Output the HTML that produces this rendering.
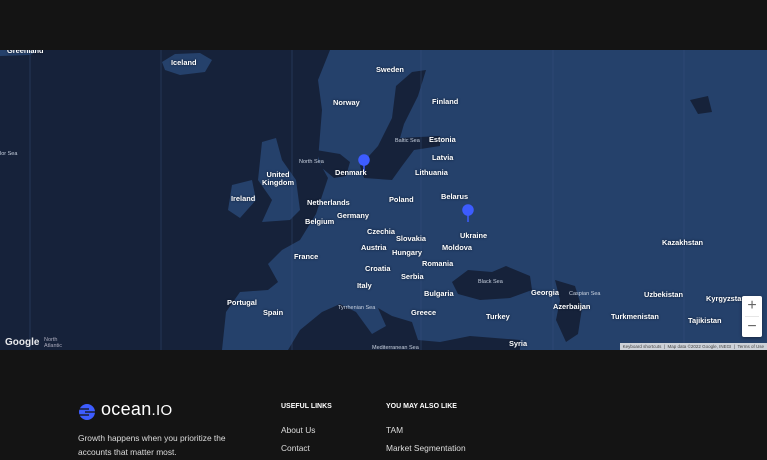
<!DOCTYPE html>
<html><head><style>
*{margin:0;padding:0;box-sizing:border-box}
body{width:767px;height:460px;background:#141414;font-family:"Liberation Sans",sans-serif;overflow:hidden;position:relative}
#map{position:absolute;left:0;top:50px;width:767px;height:300px;background:#16223a;overflow:hidden}
.l{position:absolute;color:#fff;font-weight:bold;font-size:7.4px;white-space:nowrap;text-shadow:0 0 2px #0a1528}
.s{position:absolute;color:#c9d2e0;font-size:5.5px;white-space:nowrap}
.ft{position:absolute;color:#fff}
</style></head><body>
<div id="map">
<svg width="767" height="300" style="position:absolute;left:0;top:0">
<g fill="#25416b">
<path d="M330,0 L767,0 L767,300 L222,300 L226,262 L240,242 L268,240 L278,232 L268,214 L282,200 L300,190 L316,164 L328,128 L318,110 L322,60 L318,30 Z"/>
<path d="M0,0 L40,0 L30,5 L0,6 Z"/>
<path d="M162,12 L175,4 L200,3 L212,10 L205,22 L180,25 L165,20 Z"/>
<path d="M262,92 L276,88 L282,110 L296,130 L300,160 L290,170 L262,172 L272,150 L258,130 Z"/>
<path d="M232,135 L252,130 L256,150 L240,168 L228,160 Z"/>
</g>
<g fill="#16223a">
<path d="M316,100 L340,104 L350,112 L346,126 L334,128 L322,118 Z"/>
<path d="M360,116 L378,96 L392,68 L396,36 L412,22 L426,20 L418,46 L404,74 L400,88 L440,86 L440,96 L414,100 L402,116 L392,130 L364,128 Z"/>
<path d="M288,300 L300,280 L322,262 L340,254 L356,262 L372,284 L386,276 L378,258 L392,266 L412,272 L418,290 L440,292 L470,286 L520,290 L520,300 Z"/>
<path d="M452,232 L468,220 L492,222 L506,216 L530,226 L532,240 L510,248 L480,250 L458,244 Z"/>
<path d="M555,230 L575,236 L582,258 L578,284 L566,292 L556,270 L560,250 Z"/>
<path d="M690,50 L708,46 L712,62 L698,64 Z"/>
</g>
<g stroke="#3a5480" stroke-width="0.6" opacity="0.7">
<line x1="30" y1="0" x2="30" y2="300"/><line x1="161" y1="0" x2="161" y2="300"/><line x1="292" y1="0" x2="292" y2="300"/><line x1="421" y1="0" x2="421" y2="300"/><line x1="553" y1="0" x2="553" y2="300"/><line x1="684" y1="0" x2="684" y2="300"/>
</g>
<g fill="#3d5cff" stroke="#3d5cff" stroke-width="1.5">
<circle cx="364" cy="110" r="5"/><line x1="364" y1="110" x2="364" y2="122"/>
<circle cx="468" cy="160" r="5"/><line x1="468" y1="160" x2="468" y2="172"/>
</g>
</svg>
<div class="l" style="left:7px;top:-4px">Greenland</div>
<div class="l" style="left:171px;top:8px">Iceland</div>
<div class="l" style="left:376px;top:15px">Sweden</div>
<div class="l" style="left:333px;top:48px">Norway</div>
<div class="l" style="left:432px;top:47px">Finland</div>
<div class="s" style="left:395px;top:88px">Baltic Sea</div>
<div class="l" style="left:429px;top:85px">Estonia</div>
<div class="s" style="left:0;top:101px">lor Sea</div>
<div class="s" style="left:299px;top:109px">North Sea</div>
<div class="l" style="left:432px;top:103px">Latvia</div>
<div class="l" style="left:335px;top:118px">Denmark</div>
<div class="l" style="left:415px;top:118px">Lithuania</div>
<div class="l" style="left:262px;top:121px;text-align:center;line-height:8px">United<br>Kingdom</div>
<div class="l" style="left:231px;top:144px">Ireland</div>
<div class="l" style="left:307px;top:148px">Netherlands</div>
<div class="l" style="left:389px;top:145px">Poland</div>
<div class="l" style="left:441px;top:142px">Belarus</div>
<div class="l" style="left:337px;top:161px">Germany</div>
<div class="l" style="left:305px;top:167px">Belgium</div>
<div class="l" style="left:367px;top:177px">Czechia</div>
<div class="l" style="left:396px;top:184px">Slovakia</div>
<div class="l" style="left:460px;top:181px">Ukraine</div>
<div class="l" style="left:662px;top:188px">Kazakhstan</div>
<div class="l" style="left:361px;top:193px">Austria</div>
<div class="l" style="left:442px;top:193px">Moldova</div>
<div class="l" style="left:392px;top:198px">Hungary</div>
<div class="l" style="left:294px;top:202px">France</div>
<div class="l" style="left:422px;top:209px">Romania</div>
<div class="l" style="left:365px;top:214px">Croatia</div>
<div class="l" style="left:401px;top:222px">Serbia</div>
<div class="s" style="left:478px;top:229px">Black Sea</div>
<div class="l" style="left:357px;top:231px">Italy</div>
<div class="l" style="left:424px;top:239px">Bulgaria</div>
<div class="l" style="left:531px;top:238px">Georgia</div>
<div class="s" style="left:569px;top:241px">Caspian Sea</div>
<div class="l" style="left:644px;top:240px">Uzbekistan</div>
<div class="l" style="left:706px;top:244px">Kyrgyzstan</div>
<div class="l" style="left:227px;top:248px">Portugal</div>
<div class="l" style="left:553px;top:252px">Azerbaijan</div>
<div class="s" style="left:338px;top:255px">Tyrrhenian Sea</div>
<div class="l" style="left:263px;top:258px">Spain</div>
<div class="l" style="left:411px;top:258px">Greece</div>
<div class="l" style="left:486px;top:262px">Turkey</div>
<div class="l" style="left:611px;top:262px">Turkmenistan</div>
<div class="l" style="left:688px;top:266px">Tajikistan</div>
<div class="l" style="left:509px;top:289px">Syria</div>
<div class="s" style="left:372px;top:295px">Mediterranean Sea</div>
<div class="s" style="left:44px;top:287px;line-height:6px;color:#aab">North<br>Atlantic</div>
<div style="position:absolute;left:5px;top:287px;color:#fff;font-size:10px;font-weight:bold;opacity:.9">Google</div>
<div style="position:absolute;left:742px;top:246px;width:20px;height:41px;background:#fff;border-radius:2px;box-shadow:0 1px 3px rgba(0,0,0,.4)">
<div style="font-size:16px;color:#666;text-align:center;line-height:20px">+</div>
<div style="height:1px;background:#e6e6e6;margin:0 3px"></div>
<div style="font-size:16px;color:#666;text-align:center;line-height:19px">−</div>
</div>
<div style="position:absolute;right:0;top:293px;height:7px;background:rgba(235,235,235,.85);font-size:4.5px;color:#444;line-height:7px;padding:0 3px;white-space:nowrap">Keyboard shortcuts &nbsp;|&nbsp; Map data ©2022 Google, INEGI &nbsp;|&nbsp; Terms of Use</div>
</div>
<svg style="position:absolute;left:78px;top:404px" width="18" height="16" viewBox="0 0 18 16">
<circle cx="9" cy="8" r="8" fill="#3d5cff"/>
<g stroke="#141414" stroke-width="1.3"><line x1="0" y1="5" x2="11" y2="5"/><line x1="7" y1="8" x2="18" y2="8"/><line x1="0" y1="11" x2="11" y2="11"/></g>
</svg>
<div class="ft" style="left:101px;top:399px;font-size:18px;letter-spacing:0.3px">ocean<span style="font-size:15px;font-weight:300">.IO</span></div>
<div class="ft" style="left:78px;top:431px;font-size:8.4px;line-height:14px;color:#ddd">Growth happens when you prioritize the<br>accounts that matter most.</div>
<div class="ft" style="left:281px;top:403px;font-size:7px;font-weight:bold">USEFUL LINKS</div>
<div class="ft" style="left:386px;top:403px;font-size:7px;font-weight:bold">YOU MAY ALSO LIKE</div>
<div class="ft" style="left:281px;top:425px;font-size:8.4px;color:#ddd">About Us</div>
<div class="ft" style="left:281px;top:443px;font-size:8.4px;color:#ddd">Contact</div>
<div class="ft" style="left:386px;top:425px;font-size:8.4px;color:#ddd">TAM</div>
<div class="ft" style="left:386px;top:443px;font-size:8.4px;color:#ddd">Market Segmentation</div>
</body></html>
